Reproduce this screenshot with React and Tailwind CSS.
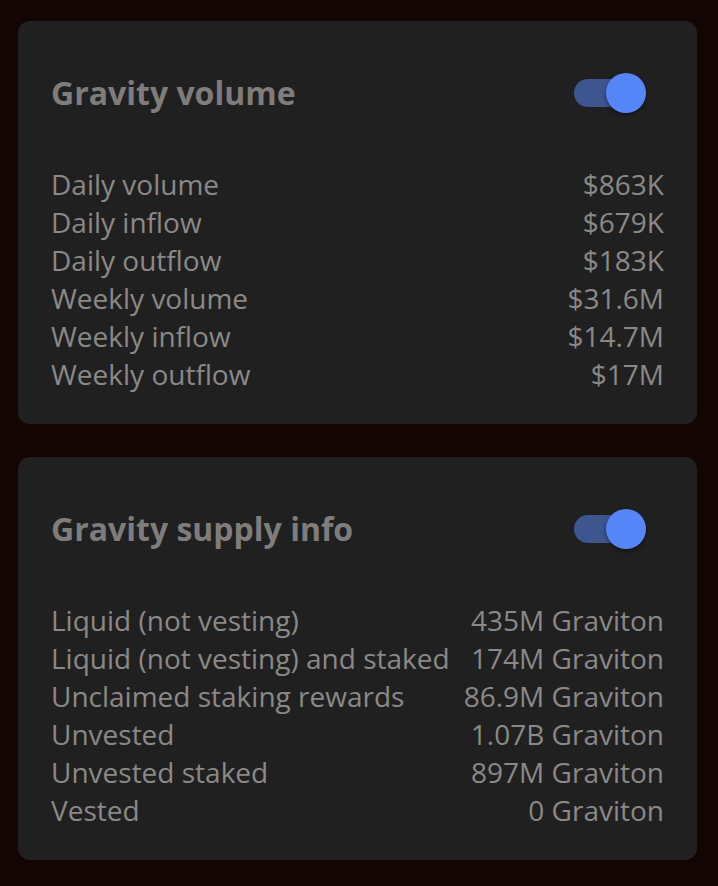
import React from 'react';

const volume = [
  ['Daily volume', '$863K'],
  ['Daily inflow', '$679K'],
  ['Daily outflow', '$183K'],
  ['Weekly volume', '$31.6M'],
  ['Weekly inflow', '$14.7M'],
  ['Weekly outflow', '$17M'],
];

const supply = [
  ['Liquid (not vesting)', '435M Graviton'],
  ['Liquid (not vesting) and staked', '174M Graviton'],
  ['Unclaimed staking rewards', '86.9M Graviton'],
  ['Unvested', '1.07B Graviton'],
  ['Unvested staked', '897M Graviton'],
  ['Vested', '0 Graviton'],
];

const Toggle = () => (
  <div className="relative w-[72px] h-10 flex items-center">
    <div className="w-[64px] h-7 rounded-full bg-[#3d5690]" />
    <div className="absolute right-0 top-0 w-10 h-10 rounded-full bg-[#5585f6] shadow-[0_2px_4px_rgba(0,0,0,0.45)]" />
  </div>
);

const Card = ({ title, rows }) => (
  <div className="bg-[#212020] rounded-xl px-[33px] pt-[52px] pb-[31px]">
    <div className="flex items-center justify-between h-10 pr-[18px]">
      <h2 className="text-[32px] font-bold text-[#7e7d7c] whitespace-nowrap">{title}</h2>
      <Toggle />
    </div>
    <div className="mt-[52px] flex flex-col">
      {rows.map(([label, value]) => (
        <div key={label} className="flex justify-between h-[38px] items-center text-[28px] text-[#8a8988] whitespace-nowrap">
          <span>{label}</span>
          <span>{value}</span>
        </div>
      ))}
    </div>
  </div>
);

export default function App() {
  return (
    <div
      className="min-h-screen bg-[#120503] pl-[18px] pr-[21px] pt-[21px] pb-[26px] flex flex-col gap-[33px]"
      style={{ fontFamily: '"Open Sans", sans-serif' }}
    >
      <Card title="Gravity volume" rows={volume} />
      <Card title="Gravity supply info" rows={supply} />
    </div>
  );
}
